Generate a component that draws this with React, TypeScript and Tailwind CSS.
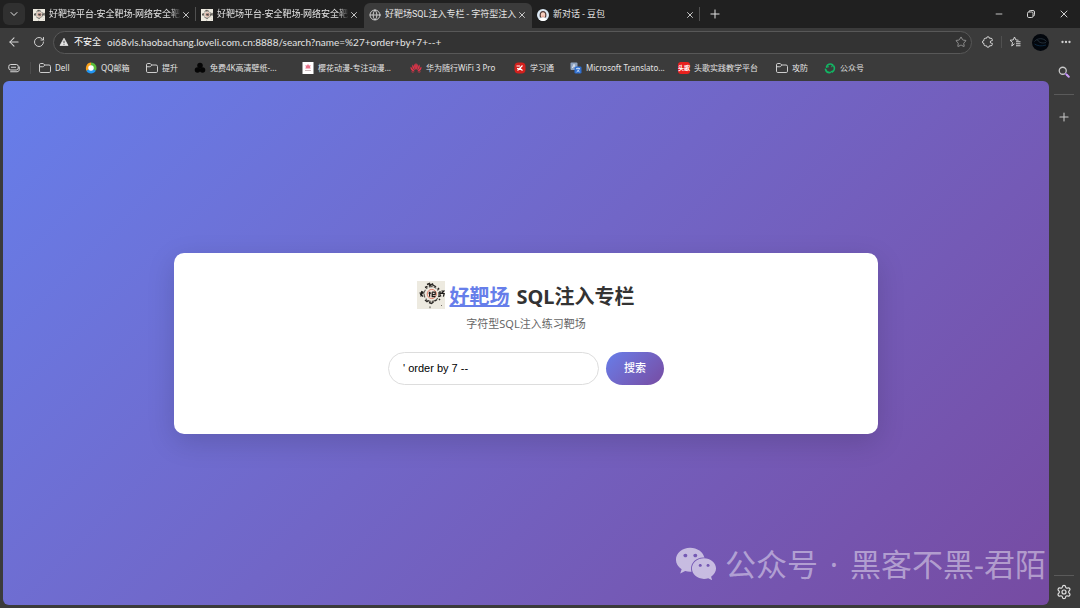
import type { ReactNode } from "react";
import { clsx } from "clsx";
import { FaWeixin } from "react-icons/fa";
import {
  ArrowLeft,
  ChevronDown,
  Ellipsis,
  Globe,
  Minus,
  Plus,
  RotateCw,
  Settings,
  Star,
  X,
} from "lucide-react";

// ---------- small drawings ----------

function RangeLogo({ className }: { className?: string }) {
  return (
    <svg viewBox="0 0 28 28" className={className} aria-hidden="true">
      <rect width="28" height="28" fill="#edeae0" />
      <circle cx="14.5" cy="13" r="7.4" fill="none" stroke="#5b554f" strokeWidth="1.1" strokeDasharray="3 1.2 1.5 1.6 4 1" />
      <path d="M8 6.500l2.500-1M10 3.500l2.500-1 .5 2M12 5l3.500-2 1 2M17 4.500l2 1.500M8 19l2 1.500 1.500-1M12 21.500l2.500 1 2-1.500M18 20l2-1.500M21 7l1 1.500M22 18l1 1" fill="none" stroke="#2a2724" strokeWidth="1.5" />
      <circle cx="14.8" cy="13" r="4.600" fill="#f3e3da" stroke="#e0816b" strokeWidth="1" />
      <path d="M2.500 12h4.500M5 10l-1.400 3.600 2.600 1.900M6.200 10.500l-2.600 5M12.600 10.800v5M11.600 12.200h2.500M15.200 11.200h3v2.500h-3v-2.500v4.400h3.200M21.800 12h4.200M23 10v5.600M21.600 15.600l2.600-.8M24.400 10h2.600l-2.400 2.500h2.600l-.8 3.200" fill="none" stroke="#1d1b19" strokeWidth="1.200" />
      <path d="M13 25.400v1.800M24 24l.8.8" stroke="#55504a" strokeWidth="1" />
    </svg>
  );
}

function AvatarIcon() {
  return (
    <svg viewBox="0 0 24 24" className="size-3" aria-hidden="true">
      <circle cx="12" cy="12" r="12" fill="#dbe9f5" />
      <path d="M6 17c-2-7 0-13 6-13s8 6 6 13z" fill="#4d3430" />
      <ellipse cx="12" cy="12" rx="4.500" ry="5.500" fill="#f4cdbd" />
      <path d="M5 21.500c1-3.500 4-4.500 7-4.500s6 1 7 4.500a12 12 0 0 1-14 0z" fill="#fff" />
      <path d="M10.500 14.500h3" stroke="#c44" strokeWidth="1" />
    </svg>
  );
}

function FolderIcon() {
  return (
    <svg viewBox="0 0 24 24" className="size-3" fill="none" stroke="#d6d6d6" strokeWidth="1.9" aria-hidden="true">
      <path d="M1 18.500V5.500a2.500 2.500 0 0 1 2.500-2.500h5l3 3H20a3 3 0 0 1 3 3v9.500a2.500 2.500 0 0 1-2.500 2.500h-17A2.500 2.500 0 0 1 1 18.500zM1 9.500h6.500c1.500 0 2-.5 4-3.500" />
    </svg>
  );
}

function QQMailIcon() {
  return (
    <svg viewBox="0 0 24 24" className="size-3" aria-hidden="true">
      <path d="M12 1a11 11 0 0 1 9.500 16.500L12 12z" fill="#5abf3a" />
      <path d="M2.500 17.500a11 11 0 0 0 19 0L12 12z" fill="#2196f3" />
      <path d="M2.500 17.500C0 10 4 1 12 1v11z" fill="#f9a11b" />
      <circle cx="12" cy="12" r="5.500" fill="#fff" />
    </svg>
  );
}

function WallpaperIcon() {
  return (
    <svg viewBox="0 0 24 24" className="size-3" aria-hidden="true">
      <circle cx="12" cy="7" r="5.500" fill="#050505" />
      <circle cx="7" cy="16" r="5.500" fill="#050505" />
      <circle cx="17" cy="16" r="5.500" fill="#050505" />
    </svg>
  );
}

function SakuraIcon() {
  return (
    <svg viewBox="0 0 24 24" className="size-3" aria-hidden="true">
      <rect x="1" width="22" height="24" fill="#fff" />
      <path d="M12 4l2 3 3.500-.5-1.500 3.500 1.500 3h-11l1.500-3L6.500 6.500 10 7z" fill="#e8728a" />
      <path d="M6 17h12" stroke="#c9b7bb" strokeWidth="2" />
    </svg>
  );
}

function HuaweiIcon() {
  return (
    <svg viewBox="0 0 24 24" className="size-3" aria-hidden="true">
      <g fill="#e3344a">
        <path d="M11.500 16C8 11 6.500 6 11 2.500c1 4 1 9 .5 13.500zM12.500 16c3.500-5 5-10 .5-13.500-1 4-1 9-.5 13.500z" />
        <path d="M10 17C4.500 13 3 8.500 5.500 5 7.500 8 9 12 10 17zM14 17c5.500-4 7-8.500 4.500-12-2 3-3.500 7-4.500 12z" />
        <path d="M9 18.500c-6 0-8.500-4-8-9C4 11.500 6.500 14.500 9 18.500zM15 18.500c6 0 8.500-4 8-9-3 2-5.500 5-8 9z" />
        <path d="M9.500 19.500c-3 2.500-6 2-7.500-.5zM14.500 19.500c3 2.500 6 2 7.500-.5z" />
      </g>
    </svg>
  );
}

function StudyIcon() {
  return (
    <svg viewBox="0 0 24 24" className="size-3" aria-hidden="true">
      <rect x="1" y="1" width="22" height="22" rx="8" fill="#d3201d" />
      <path d="M5 8h7M17 7L7 17M11 12l6 5M6 13h3" stroke="#fff" strokeWidth="2.400" fill="none" />
    </svg>
  );
}

function TranslatorIcon() {
  return (
    <svg viewBox="0 0 24 24" className="size-3" aria-hidden="true">
      <rect x="1" y="1" width="14" height="15" rx="2" fill="#8fa3bf" />
      <path d="M4.500 12L8 4.500l3.500 7.500M6 9.500h4" stroke="#e8eef6" strokeWidth="1.600" fill="none" />
      <rect x="9" y="9" width="14" height="14" rx="2.500" fill="#2f6fd0" />
      <path d="M12 13h8M16 11v2M13 20c3-1 5-3 5.500-7M14 15c1 2 3 4 5.500 5" stroke="#dbe8fa" strokeWidth="1.500" fill="none" />
    </svg>
  );
}

function EducoderIcon() {
  return (
    <span className="flex h-3 w-3 items-center justify-center rounded-[3px] bg-[#e8201c] text-[6px] leading-none font-bold whitespace-nowrap text-white">
      头歌
    </span>
  );
}

function OfficialAccountIcon() {
  return (
    <svg viewBox="0 0 24 24" className="size-3" fill="none" stroke="#12b764" strokeWidth="3.200" strokeLinecap="round" aria-hidden="true">
      <path d="M5 9.500A8 8 0 0 1 17 5.500M19.500 8a8.500 8.500 0 0 1-3 12M12.500 21A8.500 8.500 0 0 1 3 14.500" />
      <path d="M9 9.500l-4 1M17.500 5.500l-2 4M14 19.500l3-1.500" strokeWidth="2.200" />
    </svg>
  );
}

function WarningIcon() {
  return (
    <svg viewBox="0 0 20 20" className="size-[10px]" aria-hidden="true">
      <path d="M10 2.500L18 17H2z" fill="#e6e6e6" stroke="#e6e6e6" strokeWidth="1.500" strokeLinejoin="round" />
      <path d="M10 7.500v4.500M10 13.500v2" stroke="#333" strokeWidth="1.800" />
    </svg>
  );
}

function TabGroupIcon() {
  return (
    <svg viewBox="0 0 24 24" className="size-3" fill="none" stroke="#d6d6d6" strokeWidth="2" aria-hidden="true">
      <rect x="1.500" y="5" width="19" height="11" rx="4" />
      <path d="M6 10.500h10M4.500 19.500h13.500c3 0 4.500-2 4.500-4.500V9" />
    </svg>
  );
}

function ExtensionIcon() {
  return (
    <svg viewBox="0 0 24 24" className="size-3" fill="none" stroke="#d6d6d6" strokeWidth="2" strokeLinejoin="round" aria-hidden="true">
      <path d="M6.500 4.500H9a3 3 0 0 1 6 0h3a2.500 2.500 0 0 1 2.500 2.500v2.500H19a2.500 2.500 0 0 0 0 5h1.500V17a2.500 2.500 0 0 1-2.500 2.500h-3a3 3 0 0 1-6 0H6.500A2.500 2.500 0 0 1 4 17v-2a3 3 0 0 1 0-6V7a2.500 2.500 0 0 1 2.500-2.500z" />
    </svg>
  );
}

function FavoritesIcon() {
  return (
    <svg viewBox="0 0 24 24" className="size-3" fill="none" stroke="#d6d6d6" strokeWidth="2" strokeLinejoin="round" aria-hidden="true">
      <path d="M11 15.500l-5.500 4.500 1.500-7L2 8.500l6.500-.7L11 2l2.700 5.800 5.300.7M14 11.500h9M14 15.500h9M14 19.500h9" />
    </svg>
  );
}

function SidebarSearchIcon() {
  return (
    <svg viewBox="0 0 24 24" className="size-3" fill="none" strokeLinecap="round" aria-hidden="true">
      <circle cx="9.500" cy="9.500" r="7" stroke="#c9c9c9" strokeWidth="2.600" />
      <path d="M15.500 15.500l2 2" stroke="#9d6bdc" strokeWidth="3.500" />
      <path d="M17.500 17.500l4 4" stroke="#c79bf2" strokeWidth="4" />
    </svg>
  );
}

function ProfilePicture() {
  return (
    <svg viewBox="0 0 34 34" className="size-[17px]" aria-hidden="true">
      <circle cx="17" cy="17" r="17" fill="#03070d" />
      <path d="M5 15c5-7 18-8 24 0M11 12c4 6 10 7 17 5" fill="none" stroke="#2f3d4a" strokeWidth="1.500" />
      <path d="M5 20c6 4 14 5 23 2" fill="none" stroke="#123452" strokeWidth="1.500" />
    </svg>
  );
}

function RestoreIcon() {
  return (
    <svg viewBox="0 0 16 16" className="size-2" fill="none" stroke="#e0e0e0" strokeWidth="1.900" aria-hidden="true">
      <rect x="1" y="4" width="11" height="11" rx="2.500" />
      <path d="M4 4V3.500A2.500 2.500 0 0 1 6.500 1H12a3 3 0 0 1 3 3v5.500A2.500 2.500 0 0 1 12.500 12" />
    </svg>
  );
}

// ---------- browser chrome ----------

type Tab = { title: string; icon: ReactNode; active?: boolean; fade?: boolean; divider?: boolean };

const tabs: Tab[] = [
  { title: "好靶场平台-安全靶场-网络安全靶", icon: <RangeLogo className="size-3" />, fade: true, divider: true },
  { title: "好靶场平台-安全靶场-网络安全靶", icon: <RangeLogo className="size-3" />, fade: true },
  { title: "好靶场SQL注入专栏 - 字符型注入", icon: <Globe className="size-3 text-[#d6d6d6]" strokeWidth={1.8} />, active: true },
  { title: "新对话 - 豆包", icon: <AvatarIcon />, divider: true },
];

const bookmarks: { label: string; icon: ReactNode; width: string }[] = [
  { label: "Dell", icon: <FolderIcon />, width: "w-[46px]" },
  { label: "QQ邮箱", icon: <QQMailIcon />, width: "w-[61px]" },
  { label: "提升", icon: <FolderIcon />, width: "w-12" },
  { label: "免费4K高清壁纸-...", icon: <WallpaperIcon />, width: "w-27" },
  { label: "樱花动漫-专注动漫...", icon: <SakuraIcon />, width: "w-27" },
  { label: "华为随行WiFi 3 Pro", icon: <HuaweiIcon />, width: "w-26" },
  { label: "学习通", icon: <StudyIcon />, width: "w-14" },
  { label: "Microsoft Translato...", icon: <TranslatorIcon />, width: "w-27" },
  { label: "头歌实践教学平台", icon: <EducoderIcon />, width: "w-[98px]" },
  { label: "攻防", icon: <FolderIcon />, width: "w-12" },
  { label: "公众号", icon: <OfficialAccountIcon />, width: "w-14" },
];

function TabBar() {
  return (
    <div className="flex h-7 items-center bg-[#202020] text-[#e4e4e4]">
      <button aria-label="Tab actions" className="ml-[3px] flex size-[22px] shrink-0 items-center justify-center rounded-md bg-[#303030]">
        <ChevronDown className="size-3" />
      </button>
      <div className="ml-[3px] flex h-full items-end">
        {tabs.map((tab, i) => (
          <div
            key={i}
            className={clsx(
              "relative flex h-[25px] w-42 items-center pr-[5px] pb-[2px] pl-[5px]",
              tab.active && "rounded-t-md bg-[#3b3b3b]",
            )}
          >
            {tab.icon}
            <span
              className={clsx(
                "ml-1 min-w-0 flex-1 overflow-hidden font-[Roboto,'Noto_Sans_CJK_SC',sans-serif] text-[9px] whitespace-nowrap",
                tab.fade && "mask-r-from-92%",
              )}
            >
              {tab.title}
            </span>
            <button aria-label="Close tab" className="flex size-[10px] items-center justify-center">
              <X className="size-[10px]" />
            </button>
            {tab.divider && <span className="absolute top-1 right-0 h-[14px] w-px bg-[#505050]" />}
          </div>
        ))}
      </div>
      <button aria-label="New tab" className="ml-2">
        <Plus className="size-[14px]" strokeWidth={1.7} />
      </button>
      <div className="mr-[10px] ml-auto flex items-center gap-[23px]">
        <button aria-label="Minimize">
          <Minus className="size-[10px]" />
        </button>
        <button aria-label="Restore">
          <RestoreIcon />
        </button>
        <button aria-label="Close window">
          <X className="size-3" strokeWidth={1.8} />
        </button>
      </div>
    </div>
  );
}

function Toolbar() {
  return (
    <div className="flex h-7 items-center text-[#d6d6d6]">
      <button aria-label="Back" className="ml-[7px]">
        <ArrowLeft className="size-[14px]" strokeWidth={1.8} />
      </button>
      <button aria-label="Refresh" className="ml-3">
        <RotateCw className="size-3" strokeWidth={1.9} />
      </button>
      <div className="ml-2 flex h-[23px] min-w-0 flex-1 items-center rounded-full border border-[#585858] bg-[#333] pr-1 pl-[5px]">
        <WarningIcon />
        <span className="ml-[5px] shrink-0 text-[9px] text-white">不安全</span>
        <input
          aria-label="Address"
          readOnly
          value="oi68vls.haobachang.loveli.com.cn:8888/search?name=%27+order+by+7+--+"
          className="ml-1 min-w-0 flex-1 bg-transparent px-[2px] font-[Lato,sans-serif] text-[10px] text-[#e4e4e4] outline-none"
        />
        <Star className="size-3 text-[#9a9a9a]" strokeWidth={1.8} />
      </div>
      <button aria-label="Extensions" className="ml-[10px]">
        <ExtensionIcon />
      </button>
      <span className="mx-[7px] h-3 w-px bg-[#505050]" />
      <button aria-label="Favorites">
        <FavoritesIcon />
      </button>
      <button aria-label="Profile" className="ml-[11px]">
        <ProfilePicture />
      </button>
      <button aria-label="More" className="mr-2 ml-[11px]">
        <Ellipsis className="size-3" strokeWidth={2.6} />
      </button>
    </div>
  );
}

function BookmarksBar() {
  return (
    <nav className="flex h-[25px] items-center pb-[2px] text-[8px] text-[#e4e4e4]">
      <button aria-label="Workspaces" className="ml-[5px]">
        <TabGroupIcon />
      </button>
      <span className="mr-2 ml-[10px] h-3 w-px bg-[#4c4c4c]" />
      {bookmarks.map((item) => (
        <a key={item.label} href="#" className={clsx("flex shrink-0 items-center gap-1 whitespace-nowrap", item.width)}>
          <span className="shrink-0">{item.icon}</span>
          {item.label}
        </a>
      ))}
    </nav>
  );
}

function Sidebar() {
  return (
    <aside className="flex w-[31px] shrink-0 flex-col items-center pr-px pb-2 text-[#c9c9c9]">
      <button aria-label="Search sidebar" className="mt-[10px]">
        <SidebarSearchIcon />
      </button>
      <span className="mt-4 h-px w-5 bg-[#5a5a5a]" />
      <button aria-label="Customize" className="mt-[15px]">
        <Plus className="size-[14px]" strokeWidth={1.8} />
      </button>
      <span className="mt-auto h-px w-5 bg-[#5a5a5a]" />
      <button aria-label="Settings" className="mt-2">
        <Settings className="size-4 text-[#e0e0e0]" strokeWidth={1.8} />
      </button>
    </aside>
  );
}

// ---------- page ----------

function SearchCard() {
  return (
    <div className="w-[704px] max-w-full rounded-[10px] bg-white px-7 pt-7 pb-[49px] text-center shadow-[0_8px_28px_rgba(0,0,0,0.15)]">
      <h1 className="flex h-8 items-center justify-center text-[20px] font-bold text-[#333]">
        <RangeLogo className="mr-1 mb-1 size-7" />
        <a href="#" className="text-[#667eea] underline">
          好靶场
        </a>
        <span className="ml-[7px]">SQL注入专栏</span>
      </h1>
      <p className="mt-[3px] text-[11px] leading-4 text-[#666]">字符型SQL注入练习靶场</p>
      <form className="mt-5 flex justify-center gap-[7px]" onSubmit={(e) => e.preventDefault()}>
        <input
          aria-label="搜索"
          defaultValue="' order by 7 --"
          className="h-[33px] w-[211px] rounded-full border border-[#ddd] px-[14px] font-['Liberation_Sans',sans-serif] text-[11px] text-black outline-none"
        />
        <button className="h-[33px] w-[58px] rounded-full bg-linear-135 from-[#667eea] to-[#764ba2] text-[11px] font-medium text-white">
          搜索
        </button>
      </form>
    </div>
  );
}

function Watermark() {
  return (
    <div className="absolute right-[3px] bottom-[19px] flex items-center text-[31px] leading-11 whitespace-nowrap text-white/45">
      <FaWeixin className="mr-2 h-[38px] w-[42px] text-white/60" />
      <span>公众号</span>
      <span className="w-8 text-center">·</span>
      <span>黑客不黑-君陌</span>
    </div>
  );
}

export default function App() {
  return (
    <div className="flex min-h-screen flex-col bg-[#3b3b3b] font-['Noto_Sans','Noto_Sans_CJK_SC',sans-serif]">
      <TabBar />
      <Toolbar />
      <div className="flex flex-1">
        <div className="flex min-w-0 flex-1 flex-col pb-[3px] pl-[3px]">
          <BookmarksBar />
          <main className="relative flex flex-1 items-center justify-center overflow-hidden rounded-md bg-linear-135 from-[#667eea] to-[#764ba2]">
            <SearchCard />
            <Watermark />
          </main>
        </div>
        <Sidebar />
      </div>
    </div>
  );
}
